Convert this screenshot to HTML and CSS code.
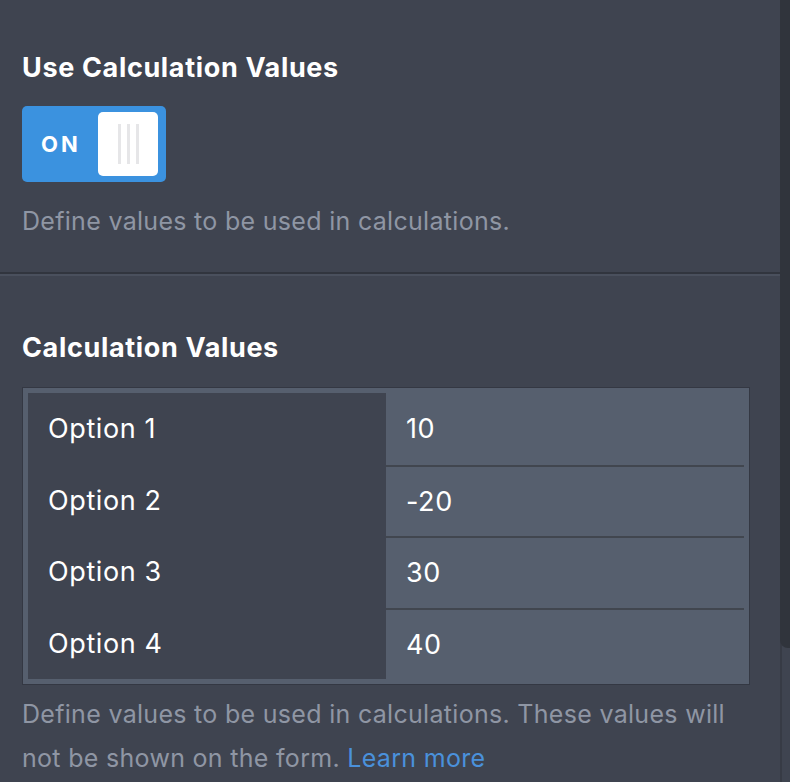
FILE: index.html
```html
<!DOCTYPE html>
<html>
<head>
<meta charset="utf-8">
<link rel="stylesheet" href="styles.css">
</head>
<body>
<div class="frame">
  <main class="panel">
    <section class="section first">
      <h2 class="title">Use Calculation Values</h2>
      <div class="toggle">
        <span class="toggle-label">ON</span>
        <span class="knob"><i></i><i></i><i></i></span>
      </div>
      <p class="desc">Define values to be used in calculations.</p>
    </section>
    <div class="divider"></div>
    <section class="section second">
      <h2 class="title">Calculation Values</h2>
      <div class="calc-table">
        <div class="opt">Option 1</div><div class="val">10</div>
        <div class="opt">Option 2</div><div class="val sep">-20</div>
        <div class="opt">Option 3</div><div class="val sep">30</div>
        <div class="opt">Option 4</div><div class="val sep">40</div>
      </div>
      <p class="desc foot">Define values to be used in calculations. These values will not be shown on the form. <a href="#" class="link">Learn more</a></p>
    </section>
  </main>
  <aside class="scrollbar"><div class="thumb"></div></aside>
</div>
</body>
</html>
```
FILE: styles.css
```css
html, body {
  margin: 0;
  padding: 0;
  background: #3f4450;
  font-family: Inter, "Noto Sans", sans-serif;
  color: #ffffff;
}
.frame {
  display: flex;
  width: 790px;
  height: 782px;
  overflow: hidden;
}
.panel {
  flex: 1;
  min-width: 0;
}
.section {
  padding: 0 30px 0 22px;
}
.section.first {
  padding-top: 52px;
}
.title {
  margin: 0;
  font-size: 27px;
  line-height: 32px;
  font-weight: 700;
  letter-spacing: 0.65px;
}
.toggle {
  margin-top: 22px;
  width: 144px;
  height: 76px;
  box-sizing: border-box;
  background: #3b92df;
  border-radius: 5px;
  display: flex;
  align-items: center;
  justify-content: space-between;
  padding: 6px 8px 6px 19px;
}
.toggle-label {
  font-size: 22px;
  font-weight: 700;
  letter-spacing: 3px;
}
.knob {
  width: 60px;
  height: 64px;
  background: #ffffff;
  border-radius: 5px;
  display: flex;
  justify-content: center;
  align-items: center;
  gap: 6px;
}
.knob i {
  display: block;
  width: 3px;
  height: 40px;
  background: #e6e6e8;
}
.desc {
  margin: 21px 0 0;
  font-size: 25px;
  line-height: 36px;
  letter-spacing: 0.3px;
  color: #8f96a4;
}
.divider {
  margin-top: 33px;
  height: 2px;
  background: #31353e;
  border-bottom: 2px solid #4a505d;
}
.section.second {
  padding-top: 56px;
}
.calc-table {
  margin-top: 23px;
  border: 1px solid #343843;
  background: #565f6e;
  padding: 5px;
  display: grid;
  grid-template-columns: 358px 1fr;
}
.opt {
  background: #3f4450;
  height: 71.5px;
  display: flex;
  align-items: center;
  padding-left: 20px;
  font-size: 27px;
  letter-spacing: 0.6px;
}
.val {
  height: 71.5px;
  box-sizing: border-box;
  display: flex;
  align-items: center;
  padding-left: 20px;
  font-size: 27px;
  letter-spacing: 0.6px;
}
.val.sep {
  border-top: 2px solid #41464f;
}
.desc.foot {
  margin-top: 7px;
  line-height: 44px;
}
.link {
  color: #4a91db;
  text-decoration: none;
}
.scrollbar {
  width: 10px;
  flex: none;
  box-sizing: border-box;
  border-left: 2px solid #373b45;
  position: relative;
}
.thumb {
  position: absolute;
  left: -2px;
  top: 0;
  width: 10px;
  height: 648px;
  background: #30343c;
  border-radius: 0 0 0 8px;
}
```
